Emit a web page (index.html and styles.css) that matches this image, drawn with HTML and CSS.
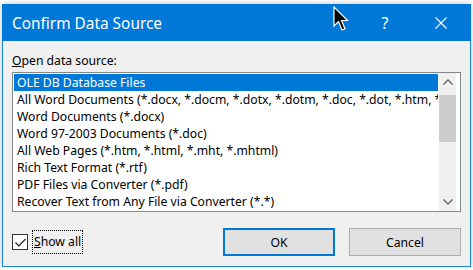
FILE: index.html
```html
<!DOCTYPE html>
<html lang="en">
<head>
    <meta charset="UTF-8">
    <meta name="viewport" content="width=device-width, initial-scale=1.0">
    <title>Confirm Data Source</title>
    <link rel="stylesheet" href="styles.css">
</head>
<body>
    <div class="window">
        <div class="titlebar">
            <span class="title">Confirm Data Source</span>
            <span class="help">?</span>
            <span class="close">
                <svg width="12" height="12" viewBox="0 0 12 12">
                    <path d="M0.5 0.5 L11.5 11.5 M11.5 0.5 L0.5 11.5" stroke="#fff" stroke-width="1.1" fill="none"/>
                </svg>
            </span>
        </div>

        <div class="dialog-body">
            <div class="label"><u>O</u>pen data source:</div>
            <div class="listbox">
                <ul class="items">
                    <li class="selected">OLE DB Database Files</li>
                    <li>All Word Documents (*.docx, *.docm, *.dotx, *.dotm, *.doc, *.dot, *.htm, *</li>
                    <li>Word Documents (*.docx)</li>
                    <li>Word 97-2003 Documents (*.doc)</li>
                    <li>All Web Pages (*.htm, *.html, *.mht, *.mhtml)</li>
                    <li>Rich Text Format (*.rtf)</li>
                    <li>PDF Files via Converter (*.pdf)</li>
                    <li>Recover Text from Any File via Converter (*.*)</li>
                </ul>
                <div class="scrollbar">
                    <svg class="arrow" width="10" height="6" viewBox="0 0 10 6">
                        <path d="M0.5 5.5 L5 1 L9.5 5.5" stroke="#606060" stroke-width="1.3" fill="none"/>
                    </svg>
                    <div class="track"><div class="thumb"></div></div>
                    <svg class="arrow" width="10" height="6" viewBox="0 0 10 6">
                        <path d="M0.5 0.5 L5 5 L9.5 0.5" stroke="#606060" stroke-width="1.3" fill="none"/>
                    </svg>
                </div>
            </div>

            <div class="footer">
                <div class="check">
                    <span class="box">
                        <svg width="11" height="9" viewBox="0 0 11 9">
                            <path d="M0.5 4.5 L3.8 7.8 L10.5 1" stroke="#222" stroke-width="1.2" fill="none"/>
                        </svg>
                    </span>
                    <span class="focus"><u>S</u>how all</span>
                </div>
                <button class="btn default">OK</button>
                <button class="btn">Cancel</button>
            </div>
        </div>

        <svg class="cursor" width="16" height="26" viewBox="0 0 16 26">
            <path d="M1 1 L1 20 L5.5 15.5 L9 24 L12 22.7 L8.5 14.5 L14.5 14.5 Z" fill="#000" stroke="#fff" stroke-width="1.2" stroke-linejoin="miter"/>
        </svg>
    </div>
</body>
</html>
```

FILE: styles.css
```css
body {
    margin: 0;
    background-color: #ffffff;
    font-family: "Noto Sans", "DejaVu Sans", sans-serif;
    font-size: 12.2px;
    color: #000;
}
.window {
    position: relative;
    width: 467px;
    margin: 4px 0 0 2px;
    border: 1px solid #1883d7;
    border-top: none;
    background-color: #f0f0f0;
    box-shadow: 0 0 6px rgba(0, 0, 0, 0.25);
}
.titlebar {
    display: flex;
    align-items: center;
    height: 37px;
    margin: 0 -1px;
    padding: 0 0 0 10px;
    background-color: #0078d7;
    color: #fff;
}
.title {
    flex: 1;
    font-size: 15.4px;
    padding-top: 1px;
}
.help {
    width: 14px;
    margin-right: 43px;
    font-size: 16px;
    text-align: center;
}
.close {
    display: flex;
    margin-right: 24px;
}
.dialog-body {
    padding: 12px 9px 10px 9px;
}
.label {
    height: 16px;
    line-height: 16px;
    margin-bottom: 3px;
}
.listbox {
    display: flex;
    height: 138px;
    border: 1px solid #828790;
    background-color: #fff;
}
.items {
    flex: 1;
    min-width: 0;
    list-style-type: none;
    margin: 0;
    padding: 1px 1px;
    overflow: hidden;
}
.items li {
    height: 17px;
    line-height: 17px;
    padding-left: 3px;
    white-space: nowrap;
    overflow: hidden;
}
.items li.selected {
    background-color: #0078d7;
    color: #fff;
}
.scrollbar {
    display: flex;
    flex-direction: column;
    align-items: center;
    width: 17px;
    margin-right: 4px;
    background-color: #f0f0f0;
}
.scrollbar .arrow {
    margin: 6px 0;
}
.track {
    flex: 1;
    width: 100%;
}
.thumb {
    height: 47px;
    margin-top: 4px;
    background-color: #cdcdcd;
}
.footer {
    display: flex;
    align-items: center;
    margin-top: 16px;
}
.check {
    flex: 1;
    display: flex;
    align-items: center;
}
.box {
    display: flex;
    align-items: center;
    justify-content: center;
    width: 14px;
    height: 14px;
    border: 1px solid #333;
    background-color: #fff;
}
.focus {
    display: inline-block;
    margin-left: 4px;
    padding: 3px 1px;
    border: 1px dotted #000;
    line-height: 16px;
}
.btn {
    width: 112px;
    height: 28px;
    font-family: inherit;
    font-size: 12.2px;
    background-color: #e1e1e1;
    border: 1px solid #adadad;
    padding: 0;
    color: #000;
}
.btn.default {
    border: 2px solid #0078d7;
    margin-right: 14px;
}
.cursor {
    position: absolute;
    left: 330px;
    top: 2px;
}
```
